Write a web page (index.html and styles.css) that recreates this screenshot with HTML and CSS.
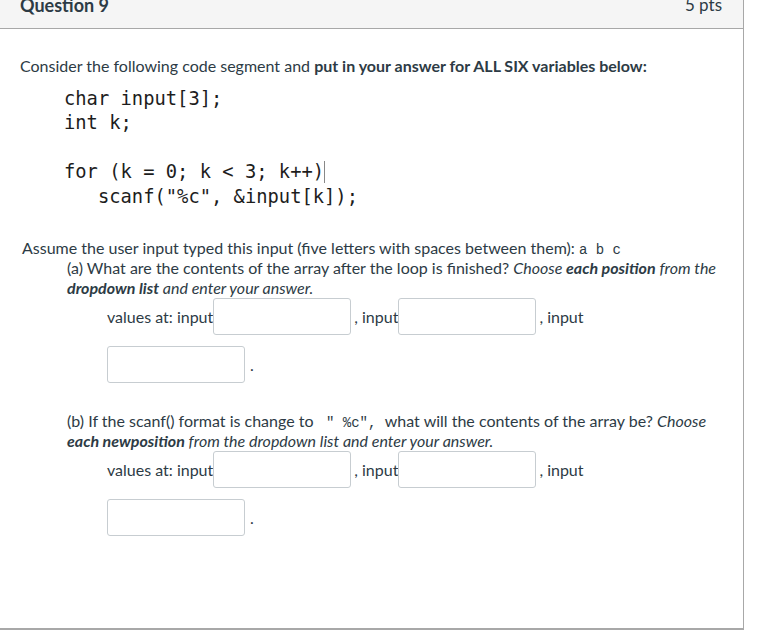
FILE: index.html
```html
<!DOCTYPE html>
<html>
<head>
<meta charset="utf-8">
<link rel="stylesheet" href="styles.css">
</head>
<body>
<div class="card">
  <div class="header">
    <span class="title">Question 9</span>
    <span class="pts">5 pts</span>
  </div>
  <div class="content">
    <p class="intro">Consider the following code segment and <strong>put in your answer for ALL SIX variables below:</strong></p>
<pre class="code">char input[3];
int k;

for (k = 0; k &lt; 3; k++)<span class="caret"></span>
   scanf("%c", &amp;input[k]);</pre>
    <p class="assume">Assume the user input typed this input (five letters with spaces between them): <span class="mono">a b c</span></p>
    <div class="part">
      <p class="q">(a) What are the contents of the array after the loop is finished? <em>Choose <strong>each position</strong> from the <strong>dropdown list</strong> and enter your answer.</em></p>
      <div class="answers">
        <div class="row"><span>values at: input</span><input class="box" type="text"><span class="sep">, input</span><input class="box" type="text"><span class="sep">, input</span></div>
        <div class="row"><input class="box" type="text"><span class="dot">.</span></div>
      </div>
      <p class="q qb">(b) If the scanf() format is change to <span class="mono">&nbsp;" %c",&nbsp;</span>what will the contents of the array be? <em>Choose <strong>each newposition</strong> from the dropdown list and enter your answer.</em></p>
      <div class="answers">
        <div class="row"><span>values at: input</span><input class="box" type="text"><span class="sep">, input</span><input class="box" type="text"><span class="sep">, input</span></div>
        <div class="row"><input class="box" type="text"><span class="dot">.</span></div>
      </div>
    </div>
  </div>
</div>
</body>
</html>
```
FILE: styles.css
```css
html, body {
  margin: 0;
  padding: 0;
  background: #ffffff;
}
body {
  font-family: Lato, "Noto Sans", sans-serif;
  color: #2d3b45;
  font-size: 16px;
  overflow: hidden;
}
.card {
  width: 743px;
  height: 645px;
  margin-top: -17px;
  border-right: 1px solid #a8a8a8;
  border-bottom: 2px solid #a8a8a8;
  box-sizing: content-box;
}
.header {
  display: flex;
  justify-content: space-between;
  align-items: center;
  background: #f5f5f5;
  border-bottom: 1px solid #a8a8a8;
  padding: 10px 21px 11px 20px;
  height: 24px;
}
.title {
  font-weight: 700;
  font-size: 18px;
  line-height: 24px;
}
.pts {
  font-size: 17px;
  line-height: 24px;
}
.content {
  padding: 25px 20px 0 20px;
}
p {
  margin: 0;
}
.intro {
  line-height: 24px;
}
.code {
  margin: 9px 0 0 44px;
  font-family: "DejaVu Sans Mono", "Liberation Mono", monospace;
  font-size: 18.8px;
  line-height: 24.4px;
  color: #1d1d1d;
}
.caret {
  display: inline-block;
  width: 1px;
  height: 22px;
  background: #888;
  vertical-align: -5px;
}
.assume {
  margin: 29px 0 0 2px;
  line-height: 20px;
}
.mono {
  font-family: "Liberation Mono", monospace;
  font-size: 14px;
  line-height: 0;
}
.part {
  margin-left: 47px;
}
.q {
  line-height: 20px;
}
.qb {
  margin-top: 28px;
}
.answers {
  margin: 0 0 0 40px;
  display: flex;
  flex-direction: column;
  gap: 11px;
}
.row {
  display: flex;
  align-items: center;
  height: 37px;
}
.box {
  box-sizing: border-box;
  width: 138px;
  height: 37px;
  border: 1px solid #c7cdd1;
  border-radius: 3px;
  background: #fff;
  margin: 0;
  padding: 0;
}
.sep {
  padding-left: 3px;
}
.dot {
  padding-left: 5px;
}
```
